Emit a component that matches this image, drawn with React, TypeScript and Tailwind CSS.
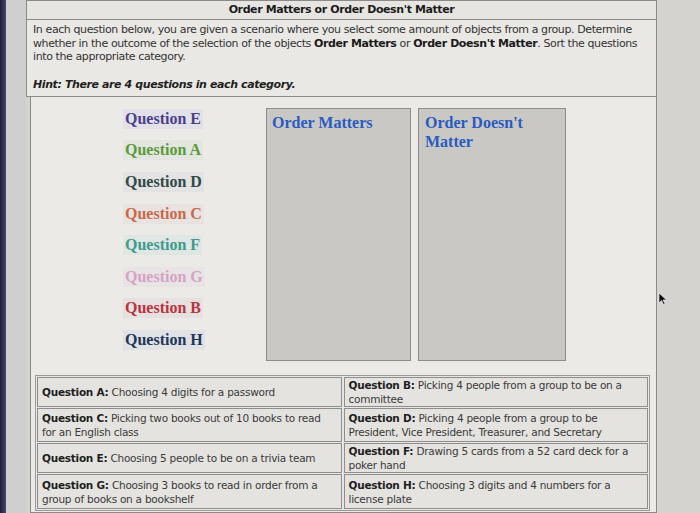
import React from "react";

const questions: { label: string; color: string; bg: string }[] = [
  { label: "Question E", color: "text-[#4b3f8c]", bg: "bg-[#e2e1e8]" },
  { label: "Question A", color: "text-[#5c9a3c]", bg: "bg-[#e2e6de]" },
  { label: "Question D", color: "text-[#2f4a48]", bg: "bg-[#e2e3e2]" },
  { label: "Question C", color: "text-[#c8694c]", bg: "bg-[#e8e3e0]" },
  { label: "Question F", color: "text-[#3e9a8c]", bg: "bg-[#e0e6e4]" },
  { label: "Question G", color: "text-[#d4a3c3]", bg: "bg-[#e8e4e6]" },
  { label: "Question B", color: "text-[#b8343e]", bg: "bg-[#e7e0e0]" },
  { label: "Question H", color: "text-[#1f3659]", bg: "bg-[#e1e2e5]" },
];

const rows: { l: [string, string]; r: [string, string]; h: string }[] = [
  {
    l: ["Question A:", " Choosing 4 digits for a password"],
    r: ["Question B:", " Picking 4 people from a group to be on a committee"],
    h: "h-[30px]",
  },
  {
    l: ["Question C:", " Picking two books out of 10 books to read for an English class"],
    r: ["Question D:", " Picking 4 people from a group to be President, Vice President, Treasurer, and Secretary"],
    h: "h-[34px]",
  },
  {
    l: ["Question E:", " Choosing 5 people to be on a trivia team"],
    r: ["Question F:", " Drawing 5 cards from a 52 card deck for a poker hand"],
    h: "h-[30px]",
  },
  {
    l: ["Question G:", " Choosing 3 books to read in order from a group of books on a bookshelf"],
    r: ["Question H:", " Choosing 3 digits and 4 numbers for a license plate"],
    h: "h-[35px]",
  },
];

function Cell({ t, h }: { t: [string, string]; h: string }) {
  return (
    <div
      className={`${h} flex-1 border border-[#8e8e8e] bg-[#e4e3df] pl-[4px] pr-[12px] flex items-center text-[10.5px] leading-[14px] text-[#3a3a3a] [font-family:'DejaVu_Sans',sans-serif] tracking-[-0.25px]`}
    >
      <div>
        <span className="font-bold text-[#1e1e1e]">{t[0]}</span>
        {t[1]}
      </div>
    </div>
  );
}

export default function App() {
  return (
    <div className="w-[700px] h-[513px] overflow-hidden relative flex bg-[#d4d3cf] [font-family:'DejaVu_Sans',sans-serif]">
      {/* left bezel */}
      <div className="w-[6px] h-full bg-gradient-to-r from-[#1e1e3a] to-[#46466a]" />
      <div className="w-[20px] h-full bg-[#cfcfcf]" />

      {/* main frame */}
      <div className="w-[631px] h-full flex flex-col">
        <div className="h-[20px] border border-[#8a8a8a] bg-[#e6e5e1] flex items-center justify-center text-[11px] font-bold text-[#1c1c1c] tracking-[-0.4px]">
          Order Matters or Order Doesn't Matter
        </div>
        <div className="h-[77px] border-x border-b border-[#8a8a8a] bg-[#e9e8e4] pl-[6px] pr-[8px] pt-[3px] text-[11px] leading-[13.5px] text-[#333] tracking-[-0.4px]">
          <p>
            In each question below, you are given a scenario where you select some amount of objects from a group. Determine
            whether in the outcome of the selection of the objects <b className="text-[#1a1a1a]">Order Matters</b> or{" "}
            <b className="text-[#1a1a1a]">Order Doesn't Matter</b>. Sort the questions into the appropriate category.
          </p>
          <p className="mt-[14px] font-bold italic text-[#1f1f1f]">Hint: There are 4 questions in each category.</p>
        </div>

        {/* body */}
        <div className="flex-1 ml-[4px] border-l border-r border-b border-[#8a8a8a] bg-[#ebeae6] flex flex-col">
          <div className="h-[268px] flex">
            {/* question list */}
            <div className="w-[235px] pl-[92px] pt-[6px] flex flex-col">
              {questions.map((q) => (
                <div key={q.label} className="h-[31.6px] flex items-center">
                  <span
                    className={`${q.color} ${q.bg} px-[2px] text-[16px] font-bold leading-[20px] [font-family:'Liberation_Serif',serif]`}
                  >
                    {q.label}
                  </span>
                </div>
              ))}
            </div>
            {/* drop boxes */}
            <div className="pt-[11px] flex gap-[7px]">
              <div className="w-[145px] h-[253px] border border-[#8d8d8d] bg-[#c9c8c4] px-[5px] pt-[4px]">
                <div className="text-[16px] font-bold leading-[19px] text-[#2a5cc0] [font-family:'Liberation_Serif',serif]">
                  Order Matters
                </div>
              </div>
              <div className="w-[148px] h-[253px] border border-[#8d8d8d] bg-[#c9c8c4] px-[6px] pt-[4px]">
                <div className="text-[16px] font-bold leading-[19px] text-[#2a5cc0] [font-family:'Liberation_Serif',serif]">
                  Order Doesn't
                  <br />
                  Matter
                </div>
              </div>
            </div>
          </div>

          {/* table */}
          <div className="mt-[10px] ml-[4px] mr-[6px] border border-[#9a9a9a] p-[1px] flex flex-col gap-[1px] bg-[#e7e6e2]">
            {rows.map((r, i) => (
              <div key={i} className="flex gap-[2px]">
                <Cell t={r.l} h={r.h} />
                <Cell t={r.r} h={r.h} />
              </div>
            ))}
          </div>
        </div>
      </div>

      {/* cursor */}
      <svg className="absolute left-[658px] top-[292px]" width="10" height="13" viewBox="0 0 10 13">
        <path d="M1 1 L1 11 L3.5 8.5 L5.5 12.5 L7 11.8 L5 8 L8.5 8 Z" fill="#111" stroke="#fff" strokeWidth="0.6" />
      </svg>
    </div>
  );
}
